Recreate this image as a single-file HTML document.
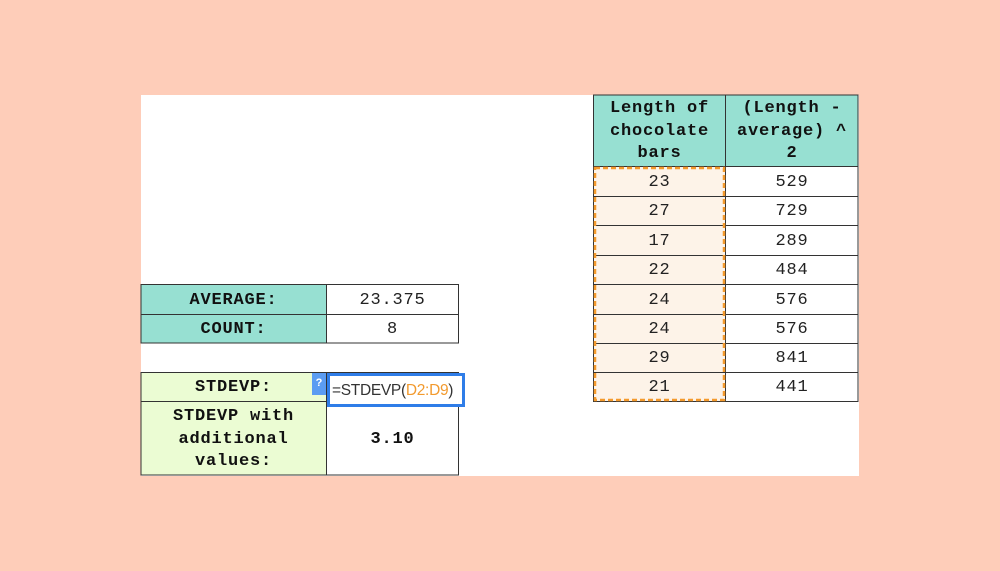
<!DOCTYPE html>
<html><head><style>
body{margin:0;width:1000px;height:571px;background:#fecdb9;position:relative;overflow:hidden;font-family:"Liberation Mono",monospace;}
.panel{position:absolute;left:141px;top:95px;width:718px;height:381px;background:#fff;}
.c{position:absolute;box-sizing:border-box;display:flex;align-items:center;justify-content:center;text-align:center;font-size:17px;letter-spacing:0.8px;color:#222;line-height:22.5px;padding-top:3px;}
.b{font-weight:bold;color:#111;}
.t{background:#97e0d2;}
.g{background:#ebfcd3;}
.o{background:#fdf3e8;}
</style></head><body>
<div class="panel"></div>
<div class="o" style="position:absolute;left:594px;top:167px;width:131px;height:234px"></div>
<div class="c t b" style="left:594px;top:95px;width:131px;height:71px">Length of<br>chocolate<br>bars</div>
<div class="c t b" style="left:726px;top:95px;width:132px;height:71px">(Length -<br>average) ^<br>2</div>
<div class="c t b" style="left:141px;top:285px;width:185px;height:29px">AVERAGE:</div>
<div class="c t b" style="left:141px;top:315px;width:185px;height:28px">COUNT:</div>
<div class="c g b" style="left:141px;top:373px;width:185px;height:28px">STDEVP:</div>
<div class="c g b" style="left:141px;top:402px;width:185px;height:73px">STDEVP with<br>additional<br>values:</div>
<svg style="position:absolute;left:0;top:0" width="1000" height="571">
<g stroke="#333" stroke-width="1" fill="none">
<rect x="593.5" y="95" width="132" height="306.5"/>
<rect x="725.5" y="95" width="132.5" height="306.5"/>
<line x1="593" y1="166.5" x2="858" y2="166.5"/>
<line x1="593" y1="196.5" x2="858" y2="196.5"/>
<line x1="593" y1="225.5" x2="858" y2="225.5"/>
<line x1="593" y1="255.5" x2="858" y2="255.5"/>
<line x1="593" y1="284.5" x2="858" y2="284.5"/>
<line x1="593" y1="314.5" x2="858" y2="314.5"/>
<line x1="593" y1="343.5" x2="858" y2="343.5"/>
<line x1="593" y1="372.5" x2="858" y2="372.5"/>
<line x1="725.5" y1="95" x2="725.5" y2="401"/>
<rect x="141" y="284.5" width="317.5" height="58.5"/>
<line x1="141" y1="314.5" x2="458" y2="314.5"/>
<line x1="326.5" y1="284" x2="326.5" y2="343"/>
<rect x="141" y="372.5" width="317.5" height="102.5"/>
<line x1="141" y1="401.5" x2="458" y2="401.5"/>
<line x1="326.5" y1="372" x2="326.5" y2="475"/>
</g>
<rect x="595" y="168" width="129" height="232" fill="none" stroke="#f49a2c" stroke-width="2.5" stroke-dasharray="5,3"/>
</svg>
<div class="c" style="left:594px;top:167px;width:131px;height:29px">23</div>
<div class="c" style="left:594px;top:197px;width:131px;height:28px">27</div>
<div class="c" style="left:594px;top:226px;width:131px;height:29px">17</div>
<div class="c" style="left:594px;top:256px;width:131px;height:28px">22</div>
<div class="c" style="left:594px;top:285px;width:131px;height:29px">24</div>
<div class="c" style="left:594px;top:315px;width:131px;height:28px">24</div>
<div class="c" style="left:594px;top:344px;width:131px;height:28px">29</div>
<div class="c" style="left:594px;top:373px;width:131px;height:28px">21</div>
<div class="c" style="left:726px;top:167px;width:132px;height:29px">529</div>
<div class="c" style="left:726px;top:197px;width:132px;height:28px">729</div>
<div class="c" style="left:726px;top:226px;width:132px;height:29px">289</div>
<div class="c" style="left:726px;top:256px;width:132px;height:28px">484</div>
<div class="c" style="left:726px;top:285px;width:132px;height:29px">576</div>
<div class="c" style="left:726px;top:315px;width:132px;height:28px">576</div>
<div class="c" style="left:726px;top:344px;width:132px;height:28px">841</div>
<div class="c" style="left:726px;top:373px;width:132px;height:28px">441</div>
<div class="c" style="left:327px;top:285px;width:131px;height:29px">23.375</div>
<div class="c" style="left:327px;top:315px;width:131px;height:28px">8</div>
<div class="c b" style="left:327px;top:402px;width:131px;height:73px">3.10</div>
<div style="position:absolute;left:312px;top:373px;width:14px;height:22px;background:#5b9cf2;color:#fff;font:bold 11px 'Liberation Sans',sans-serif;text-align:center;line-height:20px">?</div>
<div style="position:absolute;left:327px;top:373px;width:138px;height:34px;box-sizing:border-box;border:3px solid #2f7de8;background:#fff;font:15.5px 'Liberation Sans',sans-serif;color:#333;line-height:30px;padding-left:2px;white-space:nowrap;letter-spacing:-0.3px">=STDEVP(<span style="color:#f29a2e">D2:D9</span>)</div>
</body></html>
